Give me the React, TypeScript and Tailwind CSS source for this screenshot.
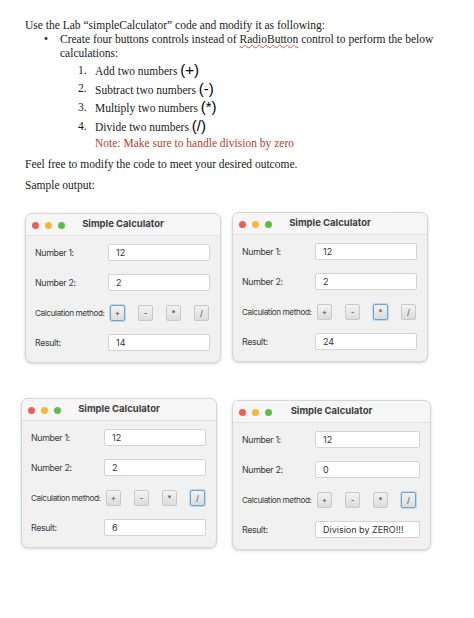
import React from 'react';

type CalcProps = {
    n1: string;
    n2: string;
    active: number;
    result: string;
    className?: string;
};

const ops = ['+', '-', '*', '/'];

const CalcWindow: React.FC<CalcProps> = ({ n1, n2, active, result, className }) => {
    const row = 'flex items-center h-[30px] pl-[9px] pr-[10px]';
    const label = 'w-[73px] shrink-0 text-[8.8px] text-[#3a3a3a] tracking-[-0.35px] whitespace-nowrap';
    const input = 'flex-1 h-[17px] bg-white border border-[#d4d4d4] rounded-[2px] px-[7px] flex items-center text-[9px] text-[#333]';

    return (
        <div className={`w-[196px] bg-[#f1f1f1] border border-[#d6d6d6] rounded-[7px] shadow-[0_1px_3px_rgba(0,0,0,0.18)] overflow-hidden ${className ?? ''}`} style={{ fontFamily: 'Inter, "Liberation Sans", sans-serif' }}>
            <div className="relative h-[22px] bg-[#f6f6f6] border-b border-[#e2e2e2] flex items-center justify-center">
                <div className="absolute left-[6px] top-[8px] flex gap-[6px]">
                    <span className="w-[7px] h-[7px] rounded-full bg-[#ec5f57]"></span>
                    <span className="w-[7px] h-[7px] rounded-full bg-[#f2b93b]"></span>
                    <span className="w-[7px] h-[7px] rounded-full bg-[#5cbf4a]"></span>
                </div>
                <span className="text-[9.5px] font-bold text-[#3d3d3d]">Simple Calculator</span>
            </div>
            <div className="pt-[2px] pb-[4px]">
                <div className={row}>
                    <span className={label}>Number 1:</span>
                    <div className={input}>{n1}</div>
                </div>
                <div className={row}>
                    <span className={label}>Number 2:</span>
                    <div className={input}>{n2}</div>
                </div>
                <div className={`${row} h-[29px]`}>
                    <span className="w-[74px] shrink-0 text-[8.2px] text-[#3a3a3a] tracking-[-0.4px] whitespace-nowrap">Calculation method:</span>
                    <div className="flex items-center gap-[13px] pl-[1px]">
                        {ops.map((op, i) => (
                            <div
                                key={op}
                                className={`w-[15px] h-[16px] rounded-[2px] flex items-center justify-center text-[8px] text-[#444] bg-gradient-to-b from-[#f2f2f2] to-[#dcdcdc] ${i === active ? 'border-[1.5px] border-[#6aa7d6] shadow-[0_0_0_1px_rgba(106,167,214,0.35)]' : 'border border-[#c9c9c9]'}`}
                            >
                                {op}
                            </div>
                        ))}
                    </div>
                </div>
                <div className={`${row} h-[27px]`}>
                    <span className={label}>Result:</span>
                    <div className={input}>{result}</div>
                </div>
            </div>
        </div>
    );
};

const Paren: React.FC<{ s: string }> = ({ s }) => (
    <span className="text-[15px] font-medium text-black" style={{ fontFamily: '"Liberation Sans", Arial, sans-serif' }}>{s}</span>
);

export default function App() {
    const items: [string, string][] = [
        ['Add two numbers', '(+)'],
        ['Subtract two numbers', '(-)'],
        ['Multiply two numbers', '(*)'],
        ['Divide two numbers', '(/)'],
    ];

    return (
        <div className="w-[474px] h-[618px] bg-white overflow-hidden" style={{ fontFamily: '"Liberation Serif", "Times New Roman", serif' }}>
            <div className="pl-[25px] pt-[18px] text-[11.5px] text-[#1a1a1a]">
                <p className="leading-[14px]">Use the Lab “simpleCalculator” code and modify it as following:</p>
                <div className="flex leading-[14px]">
                    <span className="w-[35px] shrink-0 pl-[19px]">•</span>
                    <p className="w-[385px]">
                        Create four buttons controls instead of{' '}
                        <span className="underline decoration-wavy decoration-[#d9534f] decoration-[0.5px] underline-offset-1">RadioButton</span>{' '}
                        control to perform the below calculations:
                    </p>
                </div>
                <ol className="mt-[1px]">
                    {items.map(([t, p], i) => (
                        <li key={t} className="flex items-center h-[18.7px]">
                            <span className="w-[70px] shrink-0 pl-[53px]">{i + 1}.</span>
                            <span>{t} <Paren s={p} /></span>
                        </li>
                    ))}
                </ol>
                <p className="pl-[70px] leading-[14px] text-[#c0392b]">Note: Make sure to handle division by zero</p>
                <p className="leading-[14px] mt-[7px]">Feel free to modify the code to meet your desired outcome.</p>
                <p className="leading-[14px] mt-[7px]">Sample output:</p>
            </div>

            <div className="flex items-start mt-[21px]">
                <CalcWindow n1="12" n2="2" active={0} result="14" className="ml-[25px]" />
                <CalcWindow n1="12" n2="2" active={2} result="24" className="ml-[11px] -mt-[1px]" />
            </div>
            <div className="flex items-start mt-[35px]">
                <CalcWindow n1="12" n2="2" active={3} result="6" className="ml-[21px]" />
                <CalcWindow n1="12" n2="0" active={3} result="Division by ZERO!!!" className="ml-[15px] mt-[2px] w-[199px]" />
            </div>
        </div>
    );
}
